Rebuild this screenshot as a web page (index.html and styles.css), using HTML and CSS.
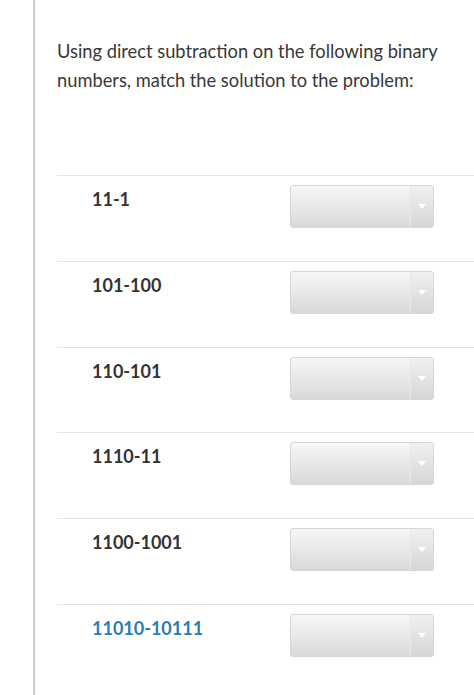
FILE: index.html
```html
<!DOCTYPE html>
<html>
<head>
<meta charset="utf-8">
<link rel="stylesheet" href="styles.css">
</head>
<body>
<div class="page">
  <div class="rail"></div>
  <div class="content">
    <p class="question">Using direct subtraction on the following binary numbers, match the solution to the problem:</p>
    <div class="rows">
      <div class="row"><div class="label">11-1</div><div class="select"><span class="arrow"></span></div></div>
      <div class="row"><div class="label">101-100</div><div class="select"><span class="arrow"></span></div></div>
      <div class="row"><div class="label">110-101</div><div class="select"><span class="arrow"></span></div></div>
      <div class="row"><div class="label">1110-11</div><div class="select"><span class="arrow"></span></div></div>
      <div class="row"><div class="label">1100-1001</div><div class="select"><span class="arrow"></span></div></div>
      <div class="row"><div class="label active">11010-10111</div><div class="select"><span class="arrow"></span></div></div>
    </div>
  </div>
</div>
</body>
</html>
```
FILE: styles.css
```css
html, body {
  margin: 0;
  padding: 0;
  background: #fff;
}
body {
  font-family: Lato, "Open Sans", sans-serif;
  color: #3a3a3a;
  overflow: hidden;
}
.page {
  display: flex;
  height: 695px;
}
.rail {
  width: 2px;
  margin-left: 33px;
  background: #cacaca;
  flex: none;
}
.content {
  flex: 1;
  padding-left: 22px;
}
.question {
  margin: 37px 20px 0 0;
  font-size: 18.3px;
  line-height: 29px;
  color: #383838;
}
.rows {
  margin-top: 80px;
}
.row {
  display: grid;
  grid-template-columns: 198px 144px;
  border-top: 1px solid #e3e3e3;
  padding: 9px 0 32.8px 35px;
  height: 43px;
}
.label {
  font-weight: 700;
  font-size: 18px;
  line-height: 20px;
  padding-top: 4px;
  color: #333;
}
.label.active {
  color: #2b7bb9;
}
.select {
  position: relative;
  box-sizing: border-box;
  height: 43px;
  border: 1px solid #d6d6d6;
  border-radius: 3px;
  background: linear-gradient(#f7f7f7, #d9d9d9);
}
.arrow {
  position: absolute;
  right: 0;
  top: 0;
  bottom: 0;
  width: 22px;
  border-left: 1px solid #e8e8e8;
  background: linear-gradient(#f0f0f0, #d6d6d6);
  border-radius: 0 2px 2px 0;
}
.arrow::after {
  content: "";
  position: absolute;
  left: 7px;
  top: 18px;
  border-left: 4px solid transparent;
  border-right: 4px solid transparent;
  border-top: 5px solid #fff;
}
```
